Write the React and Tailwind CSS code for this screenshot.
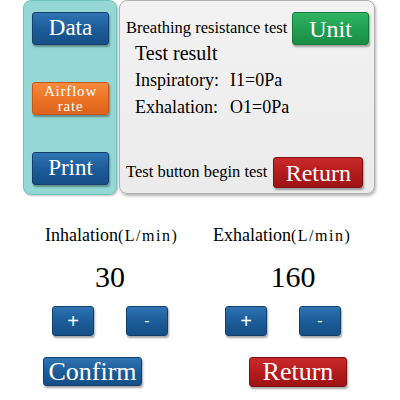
import React from "react";

function Btn({ color, className = "", children }) {
  const colors = {
    blue: "bg-gradient-to-b from-[#2f74b3] via-[#1c5c99] to-[#164f86] border-[#123f6c]",
    green: "bg-gradient-to-b from-[#2fb561] via-[#21a052] to-[#1a8c46] border-[#167a3c]",
    red: "bg-gradient-to-b from-[#c92a2a] via-[#b41c1d] to-[#9c1416] border-[#7f1012]",
    orange: "bg-gradient-to-b from-[#f58a3c] via-[#ec7424] to-[#dc641a] border-[#c4581a]",
  };
  return (
    <div
      className={`flex items-center justify-center rounded-[3px] border text-white font-['Liberation_Serif'] shadow-[1px_2px_2px_rgba(0,0,0,0.35)] ${colors[color]} ${className}`}
    >
      {children}
    </div>
  );
}

export default function App() {
  return (
    <div className="w-[400px] h-[400px] bg-white overflow-hidden text-black font-['Liberation_Serif']">
      {/* top section */}
      <div className="flex pl-[23px] gap-[2px]">
        <div className="w-[94px] h-[195px] rounded-[8px] bg-[#94d8d5] border border-[#74c3c0] shadow-[1px_1px_2px_rgba(0,0,0,0.25)] flex flex-col pt-[11px] pl-[8px] gap-[37px]">
          <Btn color="blue" className="w-[77px] h-[33px] text-[23px]">Data</Btn>
          <Btn color="orange" className="w-[77px] h-[33px] text-[15px] flex-col">
            <span className="block leading-[15px] tracking-[0.8px]">Airflow</span>
            <span className="block leading-[15px] tracking-[0.8px]">rate</span>
          </Btn>
          <Btn color="blue" className="w-[77px] h-[33px] text-[23px]">Print</Btn>
        </div>
        <div className="w-[256px] h-[194px] rounded-[8px] bg-gradient-to-b from-[#f2f2f2] to-[#ebebeb] border border-[#b0b0b0] shadow-[1px_2px_3px_rgba(0,0,0,0.3)] flex flex-col pt-[11px] pl-[6px] pr-[5px] pb-[5px]">
          <div className="flex items-center justify-between h-[33px]">
            <span className="text-[16.5px]">Breathing resistance test</span>
            <Btn color="green" className="w-[77px] h-[33px] text-[24px]">Unit</Btn>
          </div>
          <div className="-mt-[5px] pl-[9px] leading-[27px]">
            <div className="text-[20px]">Test result</div>
            <div className="flex text-[18px]">
              <span className="w-[95px]">Inspiratory:</span>
              <span>I1=0Pa</span>
            </div>
            <div className="flex text-[18px]">
              <span className="w-[95px]">Exhalation:</span>
              <span>O1=0Pa</span>
            </div>
          </div>
          <div className="mt-auto flex items-center">
            <span className="text-[16.5px]">Test button begin test</span>
            <Btn color="red" className="ml-[6px] w-[90px] h-[31px] text-[24px]">Return</Btn>
          </div>
        </div>
      </div>

      {/* bottom section */}
      <div className="flex pl-[45px] mt-[30px] leading-[20px] text-[18px]">
        <span className="w-[168px]">
          Inhalation<span className="text-[16px] tracking-[1.5px]">(L/min)</span>
        </span>
        <span>
          Exhalation<span className="text-[16px] tracking-[1.5px]">(L/min)</span>
        </span>
      </div>
      <div className="flex mt-[14px] text-[30px] leading-[34px]">
        <span className="w-[220px] text-center">30</span>
        <span className="w-[146px] text-center">160</span>
      </div>
      <div className="flex pl-[52px] mt-[12px]">
        <Btn color="blue" className="w-[42px] h-[30px] text-[20px]">
          <span className="font-['Liberation_Sans']">+</span>
        </Btn>
        <Btn color="blue" className="ml-[32px] w-[42px] h-[30px] text-[16px]">
          <span className="font-['Liberation_Sans']">-</span>
        </Btn>
        <Btn color="blue" className="ml-[57px] w-[42px] h-[30px] text-[20px]">
          <span className="font-['Liberation_Sans']">+</span>
        </Btn>
        <Btn color="blue" className="ml-[32px] w-[42px] h-[30px] text-[16px]">
          <span className="font-['Liberation_Sans']">-</span>
        </Btn>
      </div>
      <div className="flex pl-[43px] mt-[21px]">
        <Btn color="blue" className="w-[99px] h-[29px] text-[26px] leading-none">Confirm</Btn>
        <Btn color="red" className="ml-[107px] w-[98px] h-[30px] text-[26px] leading-none">Return</Btn>
      </div>
    </div>
  );
}
